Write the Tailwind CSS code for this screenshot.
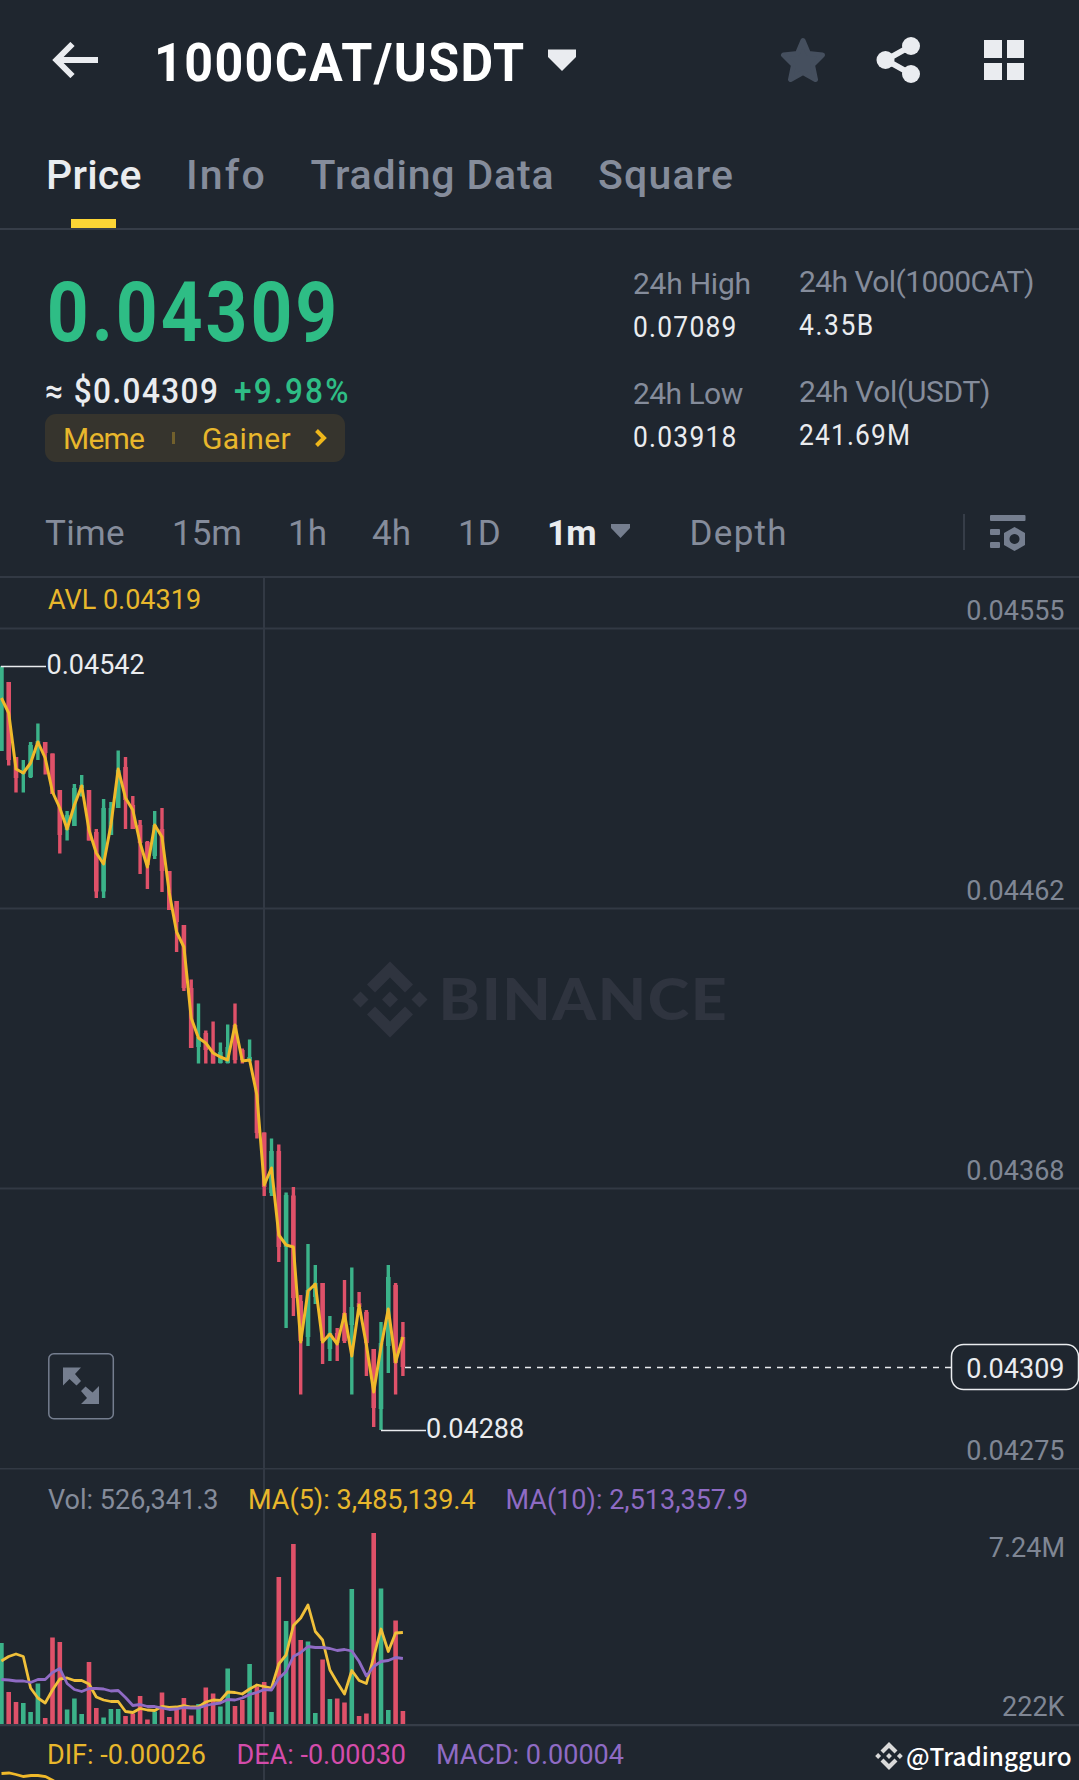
<!DOCTYPE html>
<html lang="en">
<head>
<meta charset="utf-8">
<title>1000CAT/USDT</title>
<script src="https://cdn.jsdelivr.net/npm/@tailwindcss/browser@4"></script>
</head>
<body class="w-[1079px] h-[1780px] overflow-hidden bg-[#1f262f] font-[Roboto,sans-serif] text-[#858c9b]">

<header class="flex h-[120px] items-center text-[#eaecef]">
  <svg class="ml-[52px] h-9 w-[46px] shrink-0" viewBox="0 0 46 36" fill="none" stroke="#eaecf0" stroke-width="6"><path d="M46 18H5M20.500 2L4.500 18L20.500 34"/></svg>
  <h1 class="ml-[56px] w-[394px] shrink-0 origin-left scale-x-[.93] whitespace-nowrap pt-[5px] text-[54px] font-bold leading-[60px] tracking-[1.5px] text-white">1000CAT/USDT</h1>
  <svg class="h-[22px] w-[28px] shrink-0" viewBox="0 0 28 22" fill="#eaecf0"><path d="M0 0.500H28V8L14 22L0 8Z"/></svg>
  <svg class="ml-[204px] h-[46px] w-[46px] shrink-0" viewBox="0 0 46 46" fill="#454f5e" stroke="#454f5e" stroke-width="5" stroke-linejoin="round"><path d="M23 3.500L28.500 16.500L42.500 18L32.500 28L35.500 42.500L23 35.500L10.500 42.500L13.500 28L3.500 18L17.500 16.500Z"/></svg>
  <svg class="ml-[50px] h-[46px] w-[44px] shrink-0" viewBox="0 0 44 46" fill="#eaecf0"><path d="M35 9L10 23L35 37" fill="none" stroke="#eaecf0" stroke-width="6"/><circle cx="35" cy="9" r="9"/><circle cx="9.500" cy="23" r="9"/><circle cx="35" cy="37" r="9"/></svg>
  <div class="ml-[64px] grid h-10 w-10 shrink-0 grid-cols-2 gap-[5px]"><i class="bg-[#eaecf0]"></i><i class="bg-[#eaecf0]"></i><i class="bg-[#eaecf0]"></i><i class="bg-[#eaecf0]"></i></div>
</header>

<nav class="flex h-[110px] border-b-2 border-[#363d48] pl-[46px] pt-[33px] text-[41px] font-medium leading-[44px]">
  <div class="relative w-[140px] tracking-[0.25px] text-[#eaecef]">Price<span class="absolute left-[25px] top-[66px] h-[9px] w-[45px] bg-[#fcd535]"></span></div>
  <div class="w-[124.5px] tracking-[2.2px]">Info</div>
  <div class="w-[287.5px] tracking-[0.84px]">Trading Data</div>
  <div class="tracking-[1.19px]">Square</div>
</nav>

<section class="flex h-[260px] whitespace-nowrap">
  <div class="w-[588px] shrink-0 pl-[45px] pt-[39px]">
    <div class="origin-left scale-x-[.87] pl-0.5 pt-0.5 text-[84px] font-bold leading-[84px] tracking-[3.4px] text-[#2ebd85]">0.04309</div>
    <div class="mt-[15px] flex text-[35px] font-medium leading-[44px]">
      <span class="w-[189px] origin-left scale-x-90 tracking-[1.6px] text-[#eaecef]">≈ $0.04309</span><span class="origin-left scale-x-90 tracking-[2.5px] text-[#2ebd85]">+9.98%</span>
    </div>
    <div class="flex h-12 w-[300px] items-center rounded-[11px] bg-[#36342d] pl-[18px] text-[30px] text-[#e8b72c]">
      <span class="w-[109px] tracking-[-0.8px]">Meme</span>
      <i class="h-3 w-[3px] bg-[#72602c]"></i>
      <span class="ml-[27px] w-[112px] tracking-[0.4px]">Gainer</span>
      <svg class="ml-px h-[18px] w-3" viewBox="0 0 12 18" fill="none" stroke="#efb71b" stroke-width="4"><path d="M1.500 1.500L9 9L1.500 16.500"/></svg>
    </div>
  </div>
  <div class="w-[166px] shrink-0 pl-[45px] pt-8 text-[30px] leading-[43px]">
    <div class="tracking-[-0.25px]">24h High</div><div class="origin-left scale-x-[.88] tracking-[1.4px] text-[#eaecef]">0.07089</div>
    <div class="mt-6 tracking-[-0.55px]">24h Low</div><div class="origin-left scale-x-[.88] tracking-[1.4px] text-[#eaecef]">0.03918</div>
  </div>
  <div class="ml-[45px] pt-[30px] text-[30px] leading-[43px]">
    <div class="tracking-[-0.56px]">24h Vol(1000CAT)</div><div class="origin-left scale-x-[.88] tracking-[1.8px] text-[#eaecef]">4.35B</div>
    <div class="mt-6 tracking-[-0.35px]">24h Vol(USDT)</div><div class="origin-left scale-x-[.88] tracking-[1.3px] text-[#eaecef]">241.69M</div>
  </div>
</section>

<div class="flex h-[86px] items-center whitespace-nowrap pl-[45px] pt-[3px] text-[35px]">
  <span class="w-[127px] tracking-[0.3px]">Time</span>
  <span class="w-[116px]">15m</span>
  <span class="w-[84px]">1h</span>
  <span class="w-[86px]">4h</span>
  <span class="w-[89px]">1D</span>
  <span class="w-[64px] font-bold tracking-[-0.8px] text-[#eaecef]">1m</span>
  <svg class="mb-2 h-[14px] w-[19px]" viewBox="0 0 19 14" fill="#757e8f"><path d="M0 0H19V4L9.500 14L0 4Z"/></svg>
  <span class="ml-[59.500px] w-[273px] tracking-[1.3px]">Depth</span>
  <i class="mb-1.5 h-9 w-0.5 bg-[#363d48]"></i>
  <svg class="mb-1 ml-[25px] h-9 w-[36px]" viewBox="0 0 36 36" fill="#757e8f"><rect width="35.500" height="6" rx="1"/><rect y="14" width="10" height="6" rx="1"/><rect y="27" width="10" height="6" rx="1"/><path fill-rule="evenodd" d="M24.500 12L35 18V30L24.500 36L14 30V18ZM24.500 19a5 5 0 1 0 .01 0Z"/></svg>
</div>

<main class="text-[27px] leading-8">
  <section class="relative h-[892px]">
    <svg class="absolute inset-0 h-[892px] w-[1079px]" viewBox="0 576 1079 892">
      <path d="M0 577H1079M0 628.500H1079M0 908.500H1079M0 1188.500H1079M264 577V1468" stroke="#323944" stroke-width="2"/>
      <g fill="#2f343f">
        <path transform="translate(390 999.500)" d="M0 -38L23 -15L15 -7L0 -22L-15 -7L-23 -15ZM0 38L23 15L15 7L0 22L-15 7L-23 15ZM0 -8L8 0L0 8L-8 0ZM-29.500 -8L-21.500 0L-29.500 8L-37.500 0ZM29.500 -8L37.500 0L29.500 8L21.500 0Z"/>
        <text transform="translate(438.500 1019.500) scale(1.1 1)" font-family="Lato, sans-serif" font-weight="900" font-size="57" letter-spacing="1.400">BINANCE</text>
      </g>
      <g id="candles"></g>
      <path id="avl" fill="none" stroke="#f0b92a" stroke-width="3" stroke-linejoin="round"/>
      <path d="M1 666.500H46M381 1430.500H426" stroke="#eaecef" stroke-width="1.500"/>
      <path d="M405 1367.500H951" stroke="#eaecef" stroke-width="1.500" stroke-dasharray="6 6"/>
      <rect x="951.500" y="1344.500" width="127" height="45" rx="12" fill="#1f262f" stroke="#eaecef" stroke-width="1.500"/>
      <g font-size="27" fill="#eaecef">
        <text x="46.500" y="674">0.04542</text>
        <text x="426" y="1438">0.04288</text>
        <text x="1064.500" y="1378" text-anchor="end">0.04309</text>
      </g>
      <g font-size="27" fill="#7f8694" text-anchor="end">
        <text x="1064.500" y="620">0.04555</text>
        <text x="1064.500" y="900">0.04462</text>
        <text x="1064.500" y="1180">0.04368</text>
        <text x="1064.500" y="1460">0.04275</text>
      </g>
      <g transform="translate(48 1353)">
        <rect x="0.800" y="0.800" width="64.500" height="65" rx="5" fill="none" stroke="#757e8f" stroke-width="1.500"/>
        <path fill="#757e8f" d="M15 14.500H33L27 21L33 28L28.500 32.500L21.500 26L15 32.500ZM51 51H33L39 45L33 38L37.500 33.500L44.500 39.500L51 33Z"/>
      </g>
    </svg>
    <div class="relative pl-12 pt-2 text-[#e8b72c]">AVL 0.04319</div>
  </section>

  <section class="relative h-[256px]">
    <svg class="absolute inset-0 h-[256px] w-[1079px]" viewBox="0 1468 1079 256">
      <path d="M0 1468.500H1079M264 1468V1724" stroke="#323944" stroke-width="2"/>
      <g id="volumes"></g>
      <path id="ma5" fill="none" stroke="#f0c03a" stroke-width="2.800" stroke-linejoin="round"/>
      <path id="ma10" fill="none" stroke="#8f6bc4" stroke-width="2.800" stroke-linejoin="round"/>
      <g font-size="27" fill="#7f8694" text-anchor="end"><text x="1065" y="1557">7.24M</text><text x="1064.500" y="1716">222K</text></g>
    </svg>
    <div class="relative flex pl-12 pt-4">
      <span class="w-[200px]">Vol: 526,341.3</span><span class="w-[257.500px] text-[#e8b72c]">MA(5): 3,485,139.4</span><span class="text-[#8f6bc4]">MA(10): 2,513,357.9</span>
    </div>
  </section>

  <section class="relative h-14 overflow-hidden">
    <svg class="absolute inset-0 h-14 w-[1079px]" viewBox="0 1724 1079 56">
      <path d="M0 1725H1079" stroke="#363d48" stroke-width="2.500"/><path d="M264 1726V1780" stroke="#323944" stroke-width="2"/>
      <path d="M1.500 1773.500L9 1773L16 1774.500L23.500 1776.500L31 1775.500H38L45.500 1776.500L54 1781" fill="none" stroke="#f0b92a" stroke-width="2.800"/>
    </svg>
    <div class="relative flex pl-[47px] pt-[14.500px]">
      <span class="w-[189.500px] text-[#e8b72c]">DIF: -0.00026</span><span class="w-[199.500px] text-[#d44cab]">DEA: -0.00030</span><span class="text-[#8f6bc4]">MACD: 0.00004</span>
    </div>
    <div class="absolute left-[875px] top-[16px] flex items-center whitespace-nowrap text-[24.300px] font-medium text-white">
      <svg class="h-7 w-7" viewBox="-38 -38 76 76" fill="#d9d9d9"><path d="M0 -38L23 -15L15 -7L0 -22L-15 -7L-23 -15ZM0 38L23 15L15 7L0 22L-15 7L-23 15ZM0 -8L8 0L0 8L-8 0ZM-29.500 -8L-21.500 0L-29.500 8L-37.500 0ZM29.500 -8L37.500 0L29.500 8L21.500 0Z"/></svg>
      <span class="ml-[3px] font-['Noto_Sans_CJK_SC',sans-serif]">@Tradingguro</span>
    </div>
  </section>
</main>

<script>
const GREEN = '#3bb289', RED = '#df5169';
const x = i => 1.4 + 7.3 * i;
// color, wick top, wick bottom, body top, body bottom
const candles = [
  ['g',666.5,751,666.5,751],['r',682,765.5,682,760],['r',757,792.5,757,778],['g',760,792.5,770,774],['g',742,778,745,777],['g',723.5,760,741,744],
  ['r',742,774.5,742,753],['r',753.5,794,753.5,794],['r',790,853.5,790,835],['g',811,840.5,815,830],['g',784,826,788,826],['g',775,796.5,785,788],
  ['r',790,840.5,790,840.5],['r',829,898,832,891.5],['g',799,898,808,891.5],['g',802,835,808,835],['g',750.5,808,770,808],['r',757,829,767,800],
  ['r',796,829,805,829],['r',820,874,825,843],['r',841,889,842,865],['g',811,859,825,856],['r',808,892,829,871],['r',871,910,871,910],
  ['r',901,952,901,922],['r',925,991,925,988],['r',979.5,1048,988,1048],['g',1003.5,1063.5,1037,1047],['r',1030.5,1063.5,1033,1050],['r',1021.5,1063.5,1052,1063.5],
  ['g',1042.5,1063.5,1052,1063],['g',1024.5,1063.5,1047,1063],['r',1003.5,1063.5,1025,1060],['r',1048.5,1063.5,1050,1060],['g',1039.5,1062,1057,1061],['r',1060.5,1138.5,1060.5,1133],
  ['r',1132.5,1196,1132.5,1187],['g',1138.5,1196,1151,1193],['r',1144.5,1262,1151,1247],['g',1192.5,1328,1195,1247],['r',1187,1316,1195.5,1298],['r',1295,1394.5,1301,1341],
  ['g',1244,1346,1290,1337],['g',1265,1304,1283,1297],['r',1283,1364,1283,1341],['g',1316,1361,1333,1349],['r',1328,1361,1333,1343],['r',1280,1343,1313,1341],
  ['g',1267.5,1394.5,1307,1325],['r',1292,1307,1303,1307],['r',1310,1376,1312,1343],['r',1349,1427,1349,1408],['g',1322,1430,1343,1409],['g',1265,1373,1277,1346],
  ['r',1283,1394.5,1285,1363],['r',1322,1376,1337,1367]
];
const avl = [698,713,769,773,763,742,758,792,808,829,805,786,830,853,864,825,769,798,810,843,867,825,837,893,932,947,1018,1038,1043,1053,1057,1060,1025,1061,1060,1095,1185,1168,1235,1245,1247,1342,1291,1284,1342,1334,1344,1314,1356,1305,1345,1392,1347,1309,1362,1337];
const volumes = [1643,1692,1702,1703,1712,1683.5,1718,1637.5,1642,1709.5,1698.5,1714,1662,1708,1717.5,1709,1709,1716,1713.5,1696,1719.5,1711.5,1692.5,1717,1709.5,1698,1715.5,1704,1687.5,1693.5,1706.5,1668.5,1706,1700,1664,1686.5,1682,1712,1577,1621,1544,1640,1641.5,1713,1659.5,1699,1698.5,1702.5,1589,1716,1713.5,1533,1588.5,1710,1620.5,1711];
const volumeSides = 'grrgggrrrgggrrgggrrrrgrrrrrgrrggrrgrrgrgrrggrgrrgrrrggrr';
const ma5 = [1661,1656.5,1654,1656.5,1688,1698,1703,1690,1679,1678,1680.5,1680.5,1684,1697,1700,1701.5,1701.5,1711.5,1712.5,1708.5,1710,1710.5,1706.5,1707.5,1707,1705.5,1707,1707,1702,1700,1700.5,1692,1692.5,1694,1689,1685,1686.5,1688,1664,1655,1625.5,1618,1605,1631.5,1640,1670,1682.5,1694,1670.5,1680.5,1683.5,1657,1629,1651.5,1633,1632.5];
const ma10 = [1679.5,1680,1681,1681,1682.5,1679.5,1679.5,1672.5,1668.5,1683.5,1689.5,1691.5,1688.5,1688.5,1689,1691,1690.5,1697.5,1705.5,1704.5,1706.5,1706.5,1708,1709.5,1709,1707.5,1708,1708,1705.5,1704,1703,1699.5,1700,1698,1694.5,1692.5,1689.5,1690,1678.5,1671.5,1656.5,1652.5,1646.5,1647.5,1647.5,1648.5,1650.5,1649.5,1651,1661.5,1676,1666.5,1661.5,1660.5,1657.5,1658.5];

const byId = id => document.getElementById(id);
const rect = (cx, w, top, bottom, c) => `<rect x="${cx - w / 2}" y="${top}" width="${w}" height="${bottom - top}" fill="${c === 'g' ? GREEN : RED}"/>`;
const line = ys => 'M' + ys.map((y, i) => `${x(i)} ${y}`).join('L');

byId('candles').innerHTML = candles.map(([c, t, b, bt, bb], i) => rect(x(i), 3.4, t, b, c) + rect(x(i), 4.6, bt, bb, c)).join('');
byId('volumes').innerHTML = volumes.map((t, i) => rect(x(i), 4.6, t, 1725, volumeSides[i])).join('');
byId('avl').setAttribute('d', line(avl));
byId('ma5').setAttribute('d', line(ma5));
byId('ma10').setAttribute('d', line(ma10));
</script>
</body>
</html>
